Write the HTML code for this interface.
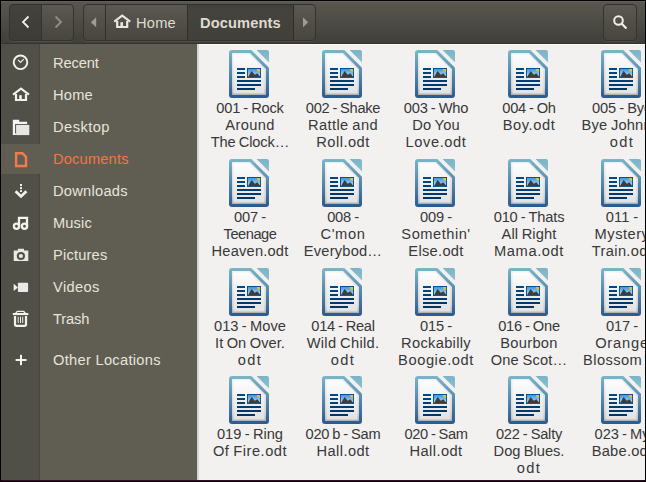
<!DOCTYPE html>
<html><head><meta charset="utf-8"><title>Documents</title>
<style>
html,body{margin:0;padding:0;}
body{width:646px;height:482px;overflow:hidden;background:#000;position:relative;font-family:"Liberation Sans","DejaVu Sans",sans-serif;}
#win{position:absolute;left:1px;top:1px;width:644px;height:479px;overflow:hidden;background:#f2f1f0;}
#hdr{position:absolute;left:0;top:0;width:644px;height:42px;background:linear-gradient(#59574f,#403f3a);border-bottom:1px solid #33322e;box-shadow:inset 0 1px 0 #63615a;}
.btn{position:absolute;box-sizing:border-box;border:1px solid #34332e;background:linear-gradient(#5a5850,#48463f);box-shadow:0 1px 0 rgba(255,255,255,0.07);}
#side{position:absolute;left:0;top:43px;width:196px;height:436px;background:#605e53;border-right:2px solid #d6d5d3;}
#sidecol{position:absolute;left:0;top:0;width:38px;height:436px;background:#504f48;border-right:1px solid #46453f;}
.srow{position:absolute;left:0;width:196px;height:32px;top:0;}
.srow.sel::before{content:"";position:absolute;left:0;top:1px;width:196px;height:30px;background:#605e53;}
.srow .sic{position:absolute;left:12px;top:8px;}
.srow .st{position:absolute;left:52px;top:0;line-height:32px;font-size:14.67px;color:#e6e4dc;white-space:nowrap;}
.srow.sel .st{color:#f07746;}
#main{position:absolute;left:198px;top:43px;width:446px;height:436px;background:#f2f1f0;overflow:hidden;box-shadow:inset 0 1px 0 #fdfdfd;}
.cell{position:absolute;width:120px;}
.cell .ico{position:absolute;left:40px;top:0;}
.cell .lab{position:absolute;left:1px;top:50px;width:120px;text-align:center;font-size:14.67px;line-height:17px;color:#383838;word-spacing:-0.7px;}
.ln{white-space:nowrap;}
</style></head><body>
<svg width="0" height="0" style="position:absolute">
<defs>
<linearGradient id="gb" x1="0" y1="0" x2="0" y2="1"><stop offset="0" stop-color="#7bb6c9"/><stop offset="1" stop-color="#2a5a90"/></linearGradient>
<linearGradient id="gp" x1="0" y1="0" x2="0" y2="1"><stop offset="0" stop-color="#fdfdfd"/><stop offset="1" stop-color="#e2e2e2"/></linearGradient>
<linearGradient id="gi" x1="0" y1="0" x2="0" y2="1"><stop offset="0" stop-color="#f1f1f1"/><stop offset="0.8" stop-color="#d4d4d4"/><stop offset="1" stop-color="#b0b0b0"/></linearGradient>
<linearGradient id="gl" gradientUnits="userSpaceOnUse" x1="0" y1="18" x2="0" y2="40"><stop offset="0" stop-color="#004a85"/><stop offset="1" stop-color="#003466"/></linearGradient>
<linearGradient id="gf" x1="0" y1="0" x2="0" y2="1"><stop offset="0" stop-color="#7ab4c6"/><stop offset="1" stop-color="#8cc0d0"/></linearGradient>
<linearGradient id="gs" x1="0" y1="0" x2="0" y2="1"><stop offset="0" stop-color="#3d97de"/><stop offset="1" stop-color="#c0e0f6"/></linearGradient>
<symbol id="doc" viewBox="0 0 40 48">
<path d="M3 0 H22.3 L40 17.7 V45 Q40 48 37 48 H3 Q0 48 0 45 V3 Q0 0 3 0 Z" fill="url(#gb)"/>
<path d="M3.5 3 H21 L37 19 V44.5 Q37 45 36.5 45 H3.5 Q3 45 3 44.5 V3.5 Q3 3 3.5 3 Z" fill="url(#gi)"/>
<path d="M4.5 4.5 H20.4 L35.5 19.6 V43.5 H4.5 Z" fill="url(#gp)"/>
<path d="M27.6 0 H37.8 Q40 0 40 2.2 V12.4 Z" fill="url(#gf)"/>
<g fill="url(#gl)"><rect x="8" y="18" width="8" height="2"/><rect x="8" y="22" width="8" height="2"/><rect x="8" y="26" width="8" height="2"/><rect x="8" y="30" width="24" height="2"/><rect x="8" y="34" width="24" height="2"/><rect x="8" y="38" width="18" height="2"/></g>
<rect x="18" y="18" width="14" height="10" fill="#004a86"/>
<rect x="18.9" y="18.9" width="12.2" height="8.2" fill="url(#gs)"/>
<path d="M19 27.1 L22.6 20.9 L25.8 24.8 L28.3 23.2 L31.1 26.6 V27.1 Z" fill="#3d3d3d"/>
<path d="M27.7 18.9 H31.1 V21.8 Q28.3 21.8 27.7 18.9 Z" fill="#e8c02c"/>
</symbol>
</defs></svg>
<div style="position:absolute;left:1px;top:480px;width:644px;height:1px;background:#370a2d"></div>
<div id="win">
<div id="hdr">
 <div class="btn" style="left:8px;top:3px;width:33px;height:37px;border-radius:4px 0 0 4px;background:linear-gradient(#44423d,#3e3c37);"></div>
 <div class="btn" style="left:40px;top:3px;width:33px;height:37px;border-radius:0 4px 4px 0;"></div>
 <svg style="position:absolute;left:17px;top:13px" width="16" height="16" viewBox="0 0 16 16"><path d="M10.5 2.5 L5 8 L10.5 13.5" fill="none" stroke="#eeeeec" stroke-width="1.8"/></svg>
 <svg style="position:absolute;left:49px;top:13px" width="16" height="16" viewBox="0 0 16 16"><path d="M5.5 2.5 L11 8 L5.5 13.5" fill="none" stroke="#8f8e88" stroke-width="1.8"/></svg>
 <div class="btn" style="left:82px;top:3px;width:233px;height:37px;border-radius:4px;"></div>
 <div style="position:absolute;left:104px;top:4px;width:1px;height:35px;background:#2f2e2a"></div>
 <div style="position:absolute;left:186px;top:4px;width:1px;height:35px;background:#2f2e2a"></div>
 <div style="position:absolute;left:187px;top:4px;width:105px;height:35px;background:linear-gradient(#413f3a 0,#45433e 4px,#42403b)"></div>
 <div style="position:absolute;left:292px;top:4px;width:1px;height:35px;background:#2f2e2a"></div>
 <svg style="position:absolute;left:89px;top:16px" width="8" height="11" viewBox="0 0 8 11"><path d="M6.2 0.2 V10.2 L0.9 5.2 Z" fill="#9e9c94"/></svg>
 <svg style="position:absolute;left:300px;top:16px" width="8" height="11" viewBox="0 0 8 11"><path d="M2 0.2 V10.2 L7.2 5.2 Z" fill="#9e9c94"/></svg>
 
 <span style="position:absolute;left:135px;top:4px;line-height:37px;font-size:14.67px;color:#dfdbd2;letter-spacing:0.2px;">Home</span>
 <span style="position:absolute;left:199px;top:4px;line-height:37px;font-size:14.67px;font-weight:bold;color:#dfdbd2;letter-spacing:0.12px;">Documents</span>
 <div class="btn" style="left:602px;top:3px;width:34px;height:37px;border-radius:4px;"></div>
 <svg style="position:absolute;left:610px;top:12px" width="18" height="18" viewBox="0 0 18 18"><circle cx="7.5" cy="7.5" r="4.3" fill="none" stroke="#eeeeec" stroke-width="2"/><path d="M10.5 10.5 L15.5 15.5" stroke="#eeeeec" stroke-width="2.2"/></svg>
</div>
<div id="side"><div id="sidecol"></div>
<div style="position:absolute;left:0;top:-43px;width:196px;">
<div class="srow" style="top:46px"><span class="st" style="letter-spacing:-0.11px">Recent</span></div>
<div class="srow" style="top:78px"><span class="st" style="letter-spacing:0.2px">Home</span></div>
<div class="srow" style="top:110px"><span class="st" style="letter-spacing:0.45px">Desktop</span></div>
<div class="srow sel" style="top:142px"><span class="st" style="letter-spacing:0.17px">Documents</span></div>
<div class="srow" style="top:174px"><span class="st" style="letter-spacing:0.25px">Downloads</span></div>
<div class="srow" style="top:206px"><span class="st" style="letter-spacing:0.12px">Music</span></div>
<div class="srow" style="top:238px"><span class="st" style="letter-spacing:0.19px">Pictures</span></div>
<div class="srow" style="top:270px"><span class="st" style="letter-spacing:0.38px">Videos</span></div>
<div class="srow" style="top:302px"><span class="st" style="letter-spacing:-0.12px">Trash</span></div>
<div class="srow" style="top:343px"><span class="st" style="letter-spacing:0.29px">Other Locations</span></div>
</div>
</div>
<div id="main"><div style="position:absolute;left:-198px;top:-43px;">
<div class="cell" style="left:188px;top:49px"><svg class="ico" width="40" height="48" viewBox="0 0 40 48"><use href="#doc"/></svg><div class="lab"><div class="ln" style="letter-spacing:-0.21px">001 - Rock</div><div class="ln" style="letter-spacing:0.36px">Around</div><div class="ln" style="letter-spacing:-0.14px">The Clock…</div></div></div>
<div class="cell" style="left:281px;top:49px"><svg class="ico" width="40" height="48" viewBox="0 0 40 48"><use href="#doc"/></svg><div class="lab"><div class="ln" style="letter-spacing:-0.29px">002 - Shake</div><div class="ln" style="letter-spacing:0.38px">Rattle and</div><div class="ln" style="letter-spacing:0.5px">Roll.odt</div></div></div>
<div class="cell" style="left:374px;top:49px"><svg class="ico" width="40" height="48" viewBox="0 0 40 48"><use href="#doc"/></svg><div class="lab"><div class="ln" style="letter-spacing:-0.2px">003 - Who</div><div class="ln" style="letter-spacing:0.16px">Do You</div><div class="ln" style="letter-spacing:0.59px">Love.odt</div></div></div>
<div class="cell" style="left:467px;top:49px"><svg class="ico" width="40" height="48" viewBox="0 0 40 48"><use href="#doc"/></svg><div class="lab"><div class="ln" style="letter-spacing:-0.27px">004 - Oh</div><div class="ln" style="letter-spacing:0.58px">Boy.odt</div></div></div>
<div class="cell" style="left:560px;top:49px"><svg class="ico" width="40" height="48" viewBox="0 0 40 48"><use href="#doc"/></svg><div class="lab"><div class="ln" style="letter-spacing:-0.14px">005 - Bye</div><div class="ln" style="letter-spacing:0.19px">Bye Johnny.</div><div class="ln" style="letter-spacing:1.3px">odt</div></div></div>
<div class="cell" style="left:188px;top:158px"><svg class="ico" width="40" height="48" viewBox="0 0 40 48"><use href="#doc"/></svg><div class="lab"><div class="ln" style="letter-spacing:-0.1px">007 -</div><div class="ln" style="letter-spacing:-0.48px">Teenage</div><div class="ln" style="letter-spacing:0.19px">Heaven.odt</div></div></div>
<div class="cell" style="left:281px;top:158px"><svg class="ico" width="40" height="48" viewBox="0 0 40 48"><use href="#doc"/></svg><div class="lab"><div class="ln" style="letter-spacing:-0.2px">008 -</div><div class="ln" style="letter-spacing:0.62px">C'mon</div><div class="ln" style="letter-spacing:0.21px">Everybod…</div></div></div>
<div class="cell" style="left:374px;top:158px"><svg class="ico" width="40" height="48" viewBox="0 0 40 48"><use href="#doc"/></svg><div class="lab"><div class="ln" style="letter-spacing:-0.1px">009 -</div><div class="ln" style="letter-spacing:0.51px">Somethin'</div><div class="ln" style="letter-spacing:0.3px">Else.odt</div></div></div>
<div class="cell" style="left:467px;top:158px"><svg class="ico" width="40" height="48" viewBox="0 0 40 48"><use href="#doc"/></svg><div class="lab"><div class="ln" style="letter-spacing:-0.16px">010 - Thats</div><div class="ln" style="letter-spacing:0.1px">All Right</div><div class="ln" style="letter-spacing:0.59px">Mama.odt</div></div></div>
<div class="cell" style="left:560px;top:158px"><svg class="ico" width="40" height="48" viewBox="0 0 40 48"><use href="#doc"/></svg><div class="lab"><div class="ln" style="letter-spacing:0.15px">011 -</div><div class="ln" style="letter-spacing:0.5px">Mystery</div><div class="ln" style="letter-spacing:0.33px">Train.odt</div></div></div>
<div class="cell" style="left:188px;top:267px"><svg class="ico" width="40" height="48" viewBox="0 0 40 48"><use href="#doc"/></svg><div class="lab"><div class="ln" style="letter-spacing:0.01px">013 - Move</div><div class="ln" style="letter-spacing:0.04px">It On Over.</div><div class="ln" style="letter-spacing:1.3px">odt</div></div></div>
<div class="cell" style="left:281px;top:267px"><svg class="ico" width="40" height="48" viewBox="0 0 40 48"><use href="#doc"/></svg><div class="lab"><div class="ln" style="letter-spacing:-0.29px">014 - Real</div><div class="ln" style="letter-spacing:0.31px">Wild Child.</div><div class="ln" style="letter-spacing:1.3px">odt</div></div></div>
<div class="cell" style="left:374px;top:267px"><svg class="ico" width="40" height="48" viewBox="0 0 40 48"><use href="#doc"/></svg><div class="lab"><div class="ln" style="letter-spacing:-0.1px">015 -</div><div class="ln" style="letter-spacing:0.31px">Rockabilly</div><div class="ln" style="letter-spacing:0.57px">Boogie.odt</div></div></div>
<div class="cell" style="left:467px;top:267px"><svg class="ico" width="40" height="48" viewBox="0 0 40 48"><use href="#doc"/></svg><div class="lab"><div class="ln" style="letter-spacing:-0.24px">016 - One</div><div class="ln" style="letter-spacing:0.3px">Bourbon</div><div class="ln" style="letter-spacing:0.18px">One Scot…</div></div></div>
<div class="cell" style="left:560px;top:267px"><svg class="ico" width="40" height="48" viewBox="0 0 40 48"><use href="#doc"/></svg><div class="lab"><div class="ln" style="letter-spacing:-0.1px">017 -</div><div class="ln" style="letter-spacing:0.8px">Orange</div><div class="ln" style="letter-spacing:0.4px">Blossom …</div></div></div>
<div class="cell" style="left:188px;top:375px"><svg class="ico" width="40" height="48" viewBox="0 0 40 48"><use href="#doc"/></svg><div class="lab"><div class="ln" style="letter-spacing:-0.02px">019 - Ring</div><div class="ln" style="letter-spacing:0.51px">Of Fire.odt</div></div></div>
<div class="cell" style="left:281px;top:375px"><svg class="ico" width="40" height="48" viewBox="0 0 40 48"><use href="#doc"/></svg><div class="lab"><div class="ln" style="letter-spacing:-0.26px">020 b - Sam</div><div class="ln" style="letter-spacing:0.44px">Hall.odt</div></div></div>
<div class="cell" style="left:374px;top:375px"><svg class="ico" width="40" height="48" viewBox="0 0 40 48"><use href="#doc"/></svg><div class="lab"><div class="ln" style="letter-spacing:-0.33px">020 - Sam</div><div class="ln" style="letter-spacing:0.44px">Hall.odt</div></div></div>
<div class="cell" style="left:467px;top:375px"><svg class="ico" width="40" height="48" viewBox="0 0 40 48"><use href="#doc"/></svg><div class="lab"><div class="ln" style="letter-spacing:-0.22px">022 - Salty</div><div class="ln" style="letter-spacing:-0.02px">Dog Blues.</div><div class="ln" style="letter-spacing:1.3px">odt</div></div></div>
<div class="cell" style="left:560px;top:375px"><svg class="ico" width="40" height="48" viewBox="0 0 40 48"><use href="#doc"/></svg><div class="lab"><div class="ln" style="letter-spacing:-0.1px">023 - My</div><div class="ln" style="letter-spacing:0.23px">Babe.odt</div></div></div>
</div></div>
</div>
<svg id="ov" style="position:absolute;left:0;top:0;pointer-events:none" width="646" height="482" viewBox="0 0 646 482">
<g fill="none" stroke="#f3f2ee">
<!-- recent -->
<circle cx="20.5" cy="62.3" r="6.8" stroke-width="1.9"/>
<path d="M18 59.9 L20.5 62.5 L23.8 59.1" stroke-width="1.1"/>
<!-- home -->
<path d="M13 94.6 L21 88.6 L29 94.6" stroke-width="2" />
<path d="M16 94 V100 H26 V94" stroke-width="2.2"/>
<!-- music -->
<path d="M19 226 V217.8 H27 V226" stroke-width="2.3"/>
<circle cx="16.5" cy="226.2" r="2.6" stroke-width="2.3"/>
<circle cx="24.5" cy="226.2" r="2.6" stroke-width="2.3"/>
<!-- downloads chevron -->
<path d="M15.6 191.2 L21 196.4 L26.4 191.2" stroke-width="2.8"/>
<!-- trash -->
<path d="M15 316 V324.3 Q15 325.8 16.5 325.8 H24.5 Q26 325.8 26 324.3 V316" stroke-width="2.2"/>
<path d="M15.6 313.5 L17.3 311.4 H23.7 L25.4 313.5" stroke-width="1.4"/>
<path d="M18.2 316.7 V323 M20.5 316.7 V323 M22.7 316.7 V323" stroke-width="1"/>
</g>
<g fill="#f3f2ee">
<rect x="19.2" y="95.2" width="2.6" height="4" />
<!-- folder -->
<path d="M12.8 119.8 H19.2 V121.8 H27.1 V124.1 H15.1 V133.6 H16.1 V135.1 H12.8 Z" fill="#f4f4f2"/>
<rect x="16.1" y="124.9" width="13.2" height="10.2" fill="#e6e6e4"/>
<!-- download dots -->
<rect x="20" y="184" width="2" height="2"/><rect x="20" y="187.1" width="2" height="2"/><rect x="20" y="190.2" width="2" height="1.8"/>
<!-- camera -->
<path d="M13.7 250.6 H17.9 V248.8 H24 V250.6 H28.3 V261.1 H13.7 Z M20.9 251.9 A4.1 4.1 0 1 0 20.9 260.1 A4.1 4.1 0 1 0 20.9 251.9 Z" fill-rule="evenodd" fill="#e9e9e7"/>
<circle cx="20.9" cy="256" r="2.1" fill="#e9e9e7"/>
<!-- video -->
<rect x="17.9" y="282.7" width="10.2" height="9.3" rx="0.8" fill="#e9e9e7"/>
<path d="M13.7 283.8 L17.9 287.4 L13.7 291 Z"/>
<!-- trash lid -->
<rect x="12.8" y="313" width="15.5" height="2.1"/>
<!-- plus -->
<rect x="15.6" y="359" width="10.9" height="2"/><rect x="20" y="354.8" width="2" height="10.4"/>
</g>
<!-- header home -->
<g transform="translate(101.2,-73)"><path d="M13 94.6 L21 88.6 L29 94.6" fill="none" stroke="#e9e7e0" stroke-width="2"/><path d="M16 94 V100 H26 V94" fill="none" stroke="#e9e7e0" stroke-width="2.2"/><rect x="19.2" y="95.2" width="2.6" height="4" fill="#e9e7e0"/></g>
<!-- documents -->
<path d="M16.1 153.3 H22.5 L26 156.8 V166 H16.1 Z" fill="none" stroke="#f37a49" stroke-width="2.4"/>
</svg>
</body></html>
